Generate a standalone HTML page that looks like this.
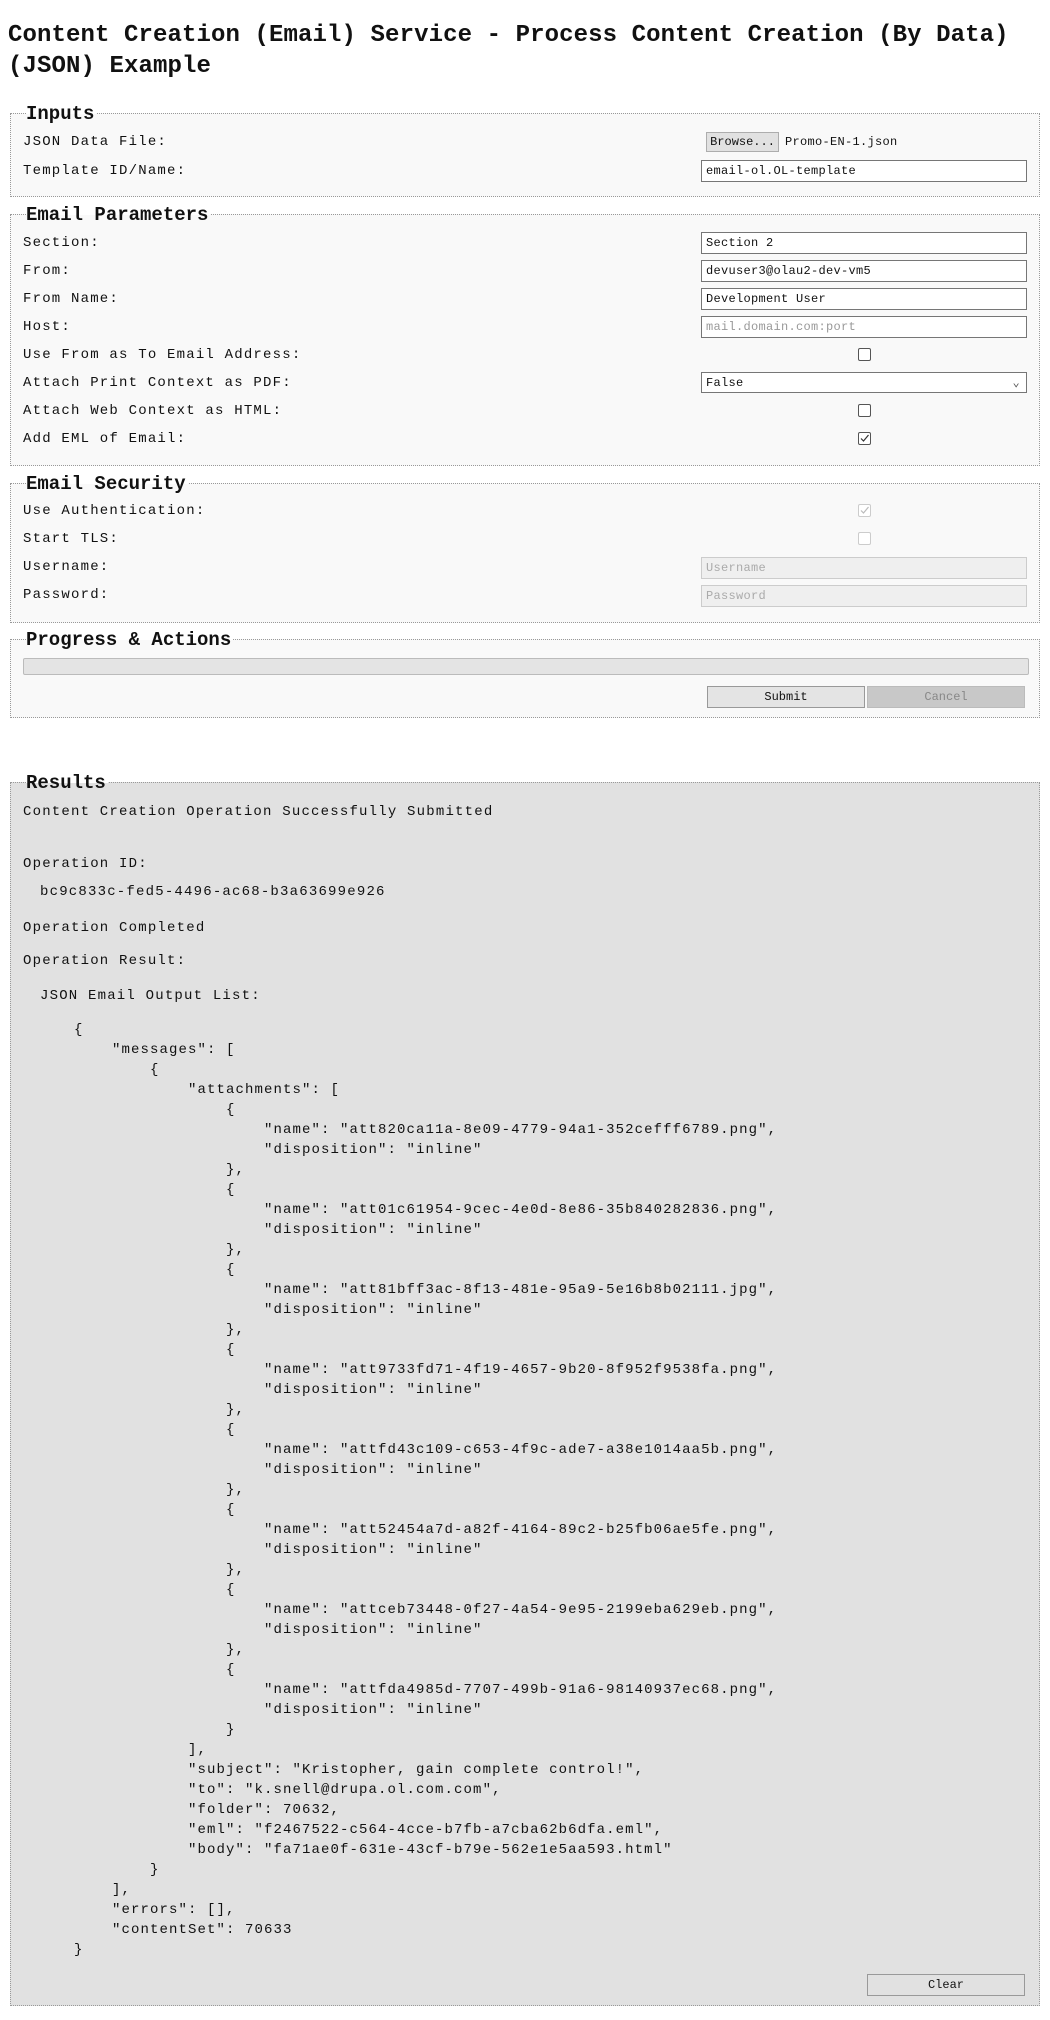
<!DOCTYPE html>
<html><head><meta charset="utf-8"><style>
*{box-sizing:border-box;margin:0;padding:0}
body{width:1050px;height:2020px;background:#fff;position:relative;font-family:"Liberation Mono",monospace;color:#111;overflow:hidden}
.a{position:absolute;white-space:pre}
.t{font-size:24px;font-weight:bold;line-height:31px;letter-spacing:0.1px}
.fs{position:absolute;left:10px;width:1030px;border:1px dotted #999;background:#f9f9f9}
.lg{position:absolute;left:26px;font-size:19px;font-weight:bold;line-height:20px;background:linear-gradient(#fff 50%,#f9f9f9 50%);padding-right:2px}
.lb{position:absolute;left:23px;font-size:14px;letter-spacing:1.2px;line-height:20px;white-space:pre}
.in{position:absolute;left:701px;width:326px;height:22px;border:1px solid #767676;background:#fff;font-size:12px;line-height:20px;padding-left:4px;letter-spacing:0.3px;white-space:pre}
.dis{background:#efefef;border-color:#ccc;color:#aaa}
.cb{position:absolute;left:858px;width:13px;height:13px;border:1px solid #555;background:#fff;border-radius:2px}
.btn{position:absolute;height:22px;border:1px solid #999;background:#e4e4e4;font-size:12px;text-align:center;line-height:20px}
.res{position:absolute;left:10px;top:782px;width:1030px;height:1224px;border:1px dotted #999;background:#e1e1e1}
.r{position:absolute;font-size:14px;letter-spacing:1.2px;line-height:20px;white-space:pre}
</style></head><body>
<div class="a t" style="left:8px;top:20px">Content Creation (Email) Service - Process Content Creation (By Data)</div>
<div class="a t" style="left:8px;top:51px">(JSON) Example</div>

<div class="fs" style="top:113px;height:84px"></div>
<div class="lg" style="top:104px">Inputs</div>
<div class="lb" style="top:132px">JSON Data File:</div>
<div class="lb" style="top:161px">Template ID/Name:</div>
<div class="btn" style="left:706px;top:132px;width:73px;height:20px;line-height:18px;background:#e1e1e1;border-color:#adadad">Browse...</div>
<div class="a" style="left:785px;top:133px;font-size:12px;line-height:18px;letter-spacing:0.3px">Promo-EN-1.json</div>
<div class="in" style="top:160px">email-ol.OL-template</div>

<div class="fs" style="top:214px;height:252px"></div>
<div class="lg" style="top:205px">Email Parameters</div>
<div class="lb" style="top:233px">Section:</div>
<div class="lb" style="top:261px">From:</div>
<div class="lb" style="top:289px">From Name:</div>
<div class="lb" style="top:317px">Host:</div>
<div class="lb" style="top:345px">Use From as To Email Address:</div>
<div class="lb" style="top:373px">Attach Print Context as PDF:</div>
<div class="lb" style="top:401px">Attach Web Context as HTML:</div>
<div class="lb" style="top:429px">Add EML of Email:</div>
<div class="in" style="top:232px">Section 2</div>
<div class="in" style="top:260px">devuser3@olau2-dev-vm5</div>
<div class="in" style="top:288px">Development User</div>
<div class="in" style="top:316px;color:#999">mail.domain.com:port</div>
<div class="cb" style="top:348px"></div>
<div class="in" style="top:372px;height:21px">False<span style="position:absolute;right:6px;top:0;color:#555">⌄</span></div>
<div class="cb" style="top:404px"></div>
<div class="cb" style="top:432px"><svg width="11" height="11" style="position:absolute;left:0;top:0"><path d="M2 5.5 L4.5 8 L9.5 2" stroke="#333" fill="none" stroke-width="1.2"/></svg></div>

<div class="fs" style="top:483px;height:140px"></div>
<div class="lg" style="top:474px">Email Security</div>
<div class="lb" style="top:501px">Use Authentication:</div>
<div class="lb" style="top:529px">Start TLS:</div>
<div class="lb" style="top:557px">Username:</div>
<div class="lb" style="top:585px">Password:</div>
<div class="cb" style="top:504px;border-color:#ccc"><svg width="11" height="11" style="position:absolute;left:0;top:0"><path d="M2 5.5 L4.5 8 L9.5 2" stroke="#bbb" fill="none" stroke-width="1.2"/></svg></div>
<div class="cb" style="top:532px;border-color:#ccc"></div>
<div class="in dis" style="top:557px">Username</div>
<div class="in dis" style="top:585px">Password</div>

<div class="fs" style="top:639px;height:79px"></div>
<div class="lg" style="top:630px">Progress &amp; Actions</div>
<div style="position:absolute;left:23px;top:658px;width:1006px;height:17px;border:1px solid #bbb;background:#e4e4e4;border-radius:2px"></div>
<div class="btn" style="left:707px;top:686px;width:158px">Submit</div>
<div class="btn" style="left:867px;top:686px;width:158px;background:#c8c8c8;border-color:#bbb;color:#888">Cancel</div>

<div class="res"></div>
<div class="lg" style="top:773px;background:linear-gradient(#fff 50%,#e1e1e1 50%)">Results</div>
<div class="r" style="left:23px;top:802px">Content Creation Operation Successfully Submitted</div>
<div class="r" style="left:23px;top:854px">Operation ID:</div>
<div class="r" style="left:40px;top:882px">bc9c833c-fed5-4496-ac68-b3a63699e926</div>
<div class="r" style="left:23px;top:918px">Operation Completed</div>
<div class="r" style="left:23px;top:951px">Operation Result:</div>
<div class="r" style="left:40px;top:986px">JSON Email Output List:</div>
<div class="r" style="left:36px;top:1020px;letter-spacing:1.1px">    {
        "messages": [
            {
                "attachments": [
                    {
                        "name": "att820ca11a-8e09-4779-94a1-352cefff6789.png",
                        "disposition": "inline"
                    },
                    {
                        "name": "att01c61954-9cec-4e0d-8e86-35b840282836.png",
                        "disposition": "inline"
                    },
                    {
                        "name": "att81bff3ac-8f13-481e-95a9-5e16b8b02111.jpg",
                        "disposition": "inline"
                    },
                    {
                        "name": "att9733fd71-4f19-4657-9b20-8f952f9538fa.png",
                        "disposition": "inline"
                    },
                    {
                        "name": "attfd43c109-c653-4f9c-ade7-a38e1014aa5b.png",
                        "disposition": "inline"
                    },
                    {
                        "name": "att52454a7d-a82f-4164-89c2-b25fb06ae5fe.png",
                        "disposition": "inline"
                    },
                    {
                        "name": "attceb73448-0f27-4a54-9e95-2199eba629eb.png",
                        "disposition": "inline"
                    },
                    {
                        "name": "attfda4985d-7707-499b-91a6-98140937ec68.png",
                        "disposition": "inline"
                    }
                ],
                "subject": "Kristopher, gain complete control!",
                "to": "k.snell@drupa.ol.com.com",
                "folder": 70632,
                "eml": "f2467522-c564-4cce-b7fb-a7cba62b6dfa.eml",
                "body": "fa71ae0f-631e-43cf-b79e-562e1e5aa593.html"
            }
        ],
        "errors": [],
        "contentSet": 70633
    }</div>
<div class="btn" style="left:867px;top:1974px;width:158px;background:#e1e1e1">Clear</div>
</body></html>
